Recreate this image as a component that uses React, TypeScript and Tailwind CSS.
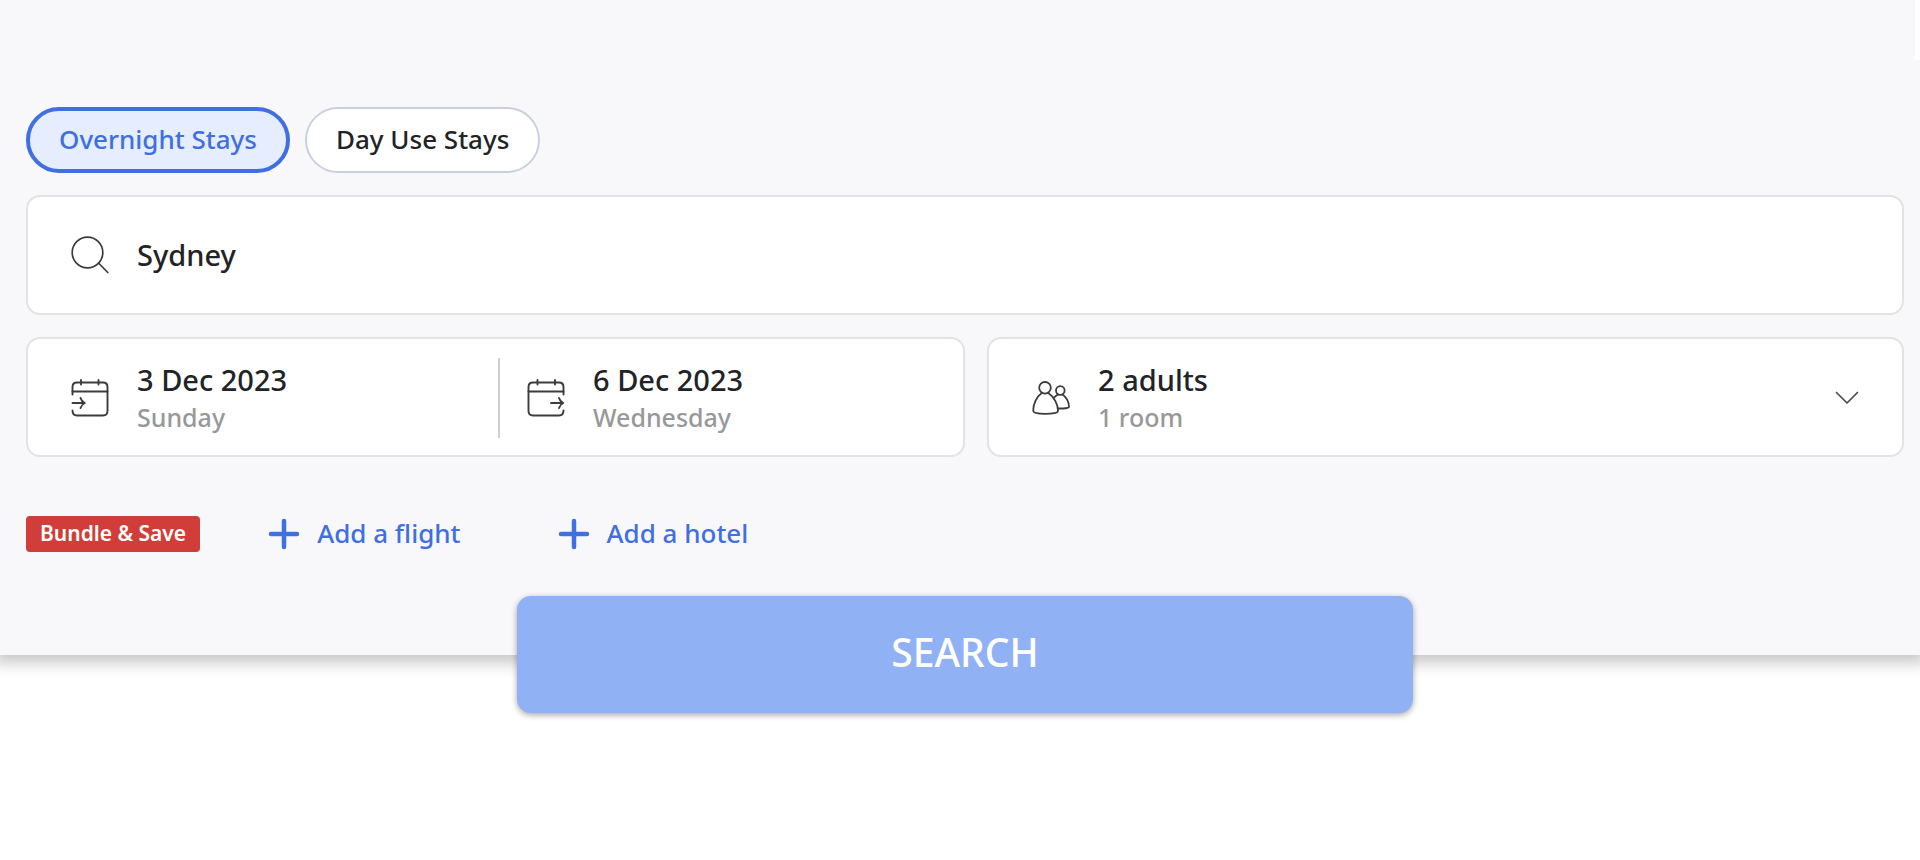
import { useState } from "react";
import type { ReactNode } from "react";

const iconClass = "h-[38px] w-[38px] shrink-0";

function SearchIcon() {
  return (
    <svg viewBox="0 0 38 38" className={iconClass} fill="none" stroke="#3a3c40" strokeWidth="1.7" strokeLinecap="round" aria-hidden="true">
      <circle cx="16.5" cy="16.5" r="15.3" />
      <path d="M27.5 27 36.8 36.5" />
    </svg>
  );
}

function CheckInIcon() {
  return (
    <svg viewBox="0 0 38 38" className={iconClass} fill="none" stroke="#3a3c40" strokeWidth="1.9" strokeLinecap="round" strokeLinejoin="round" aria-hidden="true">
      <path d="M1.5 15.5V8Q1.5 3.5 6 3.5H32Q36.5 3.5 36.5 8V32Q36.5 36.5 32 36.5H6Q1.5 36.5 1.5 31.5" />
      <path d="M1.5 12.5H36.5M10 1V5.5M27.5 1V5.5" />
      <path d="M1.5 24H13.5M9.5 19Q10.5 22.5 13.8 24Q10.5 25.5 9.5 29" />
    </svg>
  );
}

function CheckOutIcon() {
  return (
    <svg viewBox="0 0 38 38" className={iconClass} fill="none" stroke="#3a3c40" strokeWidth="1.9" strokeLinecap="round" strokeLinejoin="round" aria-hidden="true">
      <path d="M36.5 15.5V8Q36.5 3.5 32 3.5H6Q1.5 3.5 1.5 8V32Q1.5 36.5 6 36.5H32Q36.5 36.5 36.5 31.5" />
      <path d="M1.5 12.5H36.5M10.5 1V5.5M28 1V5.5" />
      <path d="M24 24H36M32 19Q33 22.5 36.3 24Q33 25.5 32 29" />
    </svg>
  );
}

function GuestsIcon() {
  return (
    <svg viewBox="0 0 38 38" className={iconClass} fill="none" stroke="#3a3c40" strokeWidth="1.8" strokeLinecap="round" strokeLinejoin="round" aria-hidden="true">
      <circle cx="13" cy="8.8" r="5.8" />
      <path d="M9.5 14.2C4.5 17.5 1.2 25.5 1.2 31.8C1.2 34 6 34.8 13.2 34.8C20.5 34.8 26 34 26 31.8C26 25.5 22 17.5 16.5 14.2" />
      <circle cx="28.3" cy="11.5" r="4.3" />
      <path d="M22.2 18.5Q24 16.5 26 15.6M30.6 15.4C34.500 18 37 23.500 37 27.800C37 29.300 32 29.600 26 29.500" />
    </svg>
  );
}

function ChevronIcon() {
  return (
    <svg viewBox="0 0 24 14" className="h-[14px] w-6 shrink-0" fill="none" stroke="#4b4d50" strokeWidth="1.7" strokeLinecap="round" strokeLinejoin="round" aria-hidden="true">
      <path d="M1.500 1.500 12 12 22.500 1.500" />
    </svg>
  );
}

function PlusIcon() {
  return (
    <svg viewBox="0 0 32 32" className="h-8 w-8 shrink-0" fill="none" stroke="#406fe2" strokeWidth="4.5" strokeLinecap="round" aria-hidden="true">
      <path d="M16 3V29M3 16H29" />
    </svg>
  );
}

function Field({ icon, title, detail, children }: { icon: ReactNode; title: string; detail: string; children?: ReactNode }) {
  return (
    <button type="button" className="flex h-full w-full items-center gap-7 text-left">
      {icon}
      <span className="flex flex-1 flex-col">
        <span className="text-[29px] leading-[38px]">{title}</span>
        <span className="text-[25px] leading-9 text-[#97989a]">{detail}</span>
      </span>
      {children}
    </button>
  );
}

function AddLink({ label }: { label: string }) {
  return (
    <a href="#" className="flex items-center gap-[17px] text-[26px] leading-9 text-[#406fe2]">
      <PlusIcon />
      <span className="pb-0.5">{label}</span>
    </a>
  );
}

const card = "h-[120px] items-center rounded-[14px] border-2 border-[#e2e3e5] bg-white";

export default function App() {
  const [stay, setStay] = useState("Overnight Stays");
  const [place, setPlace] = useState("Sydney");

  return (
    <main className="min-h-screen overflow-x-hidden bg-white font-['Noto_Sans',sans-serif] font-medium text-[#222326]">
      <form
        className="bg-[#f8f8fb] shadow-[0_2px_14px_6px_rgba(0,0,0,0.22)]"
        onSubmit={(e) => e.preventDefault()}
      >
        <div className="h-[60px] border-r-[5px] border-white" />
        <div className="flex flex-col pr-4 pl-[26px] pt-[47px]">
          <div className="mb-[22px] flex gap-[15px]">
            {["Overnight Stays", "Day Use Stays"].map((name) => (
              <button
                key={name}
                type="button"
                aria-pressed={stay === name}
                onClick={() => setStay(name)}
                className={
                  stay === name
                    ? "h-[66px] rounded-full border-4 border-[#406fe2] bg-[#e6edfe] px-[29px] pb-0.5 text-[26px] text-[#406fe2]"
                    : "h-[66px] rounded-full border-2 border-[#c8d0e2] bg-white px-[29px] pb-0.5 text-[26px]"
                }
              >
                {name}
              </button>
            ))}
          </div>

          <label className={`${card} mb-[22px] flex gap-7 px-[43px]`}>
            <SearchIcon />
            <input
              type="text"
              aria-label="Destination"
              value={place}
              onChange={(e) => setPlace(e.target.value)}
              className="min-w-0 flex-1 bg-transparent text-[29px] leading-[38px] outline-none"
            />
          </label>

          <div className="grid grid-cols-[939fr_917fr] gap-[22px]">
            <div className={`${card} grid grid-cols-[427fr_2px_463fr] pt-0.5 pl-[43px]`}>
              <Field icon={<CheckInIcon />} title="3 Dec 2023" detail="Sunday" />
              <span className="h-20 bg-[#cfd0d2]" />
              <div className="pl-[27px]">
                <Field icon={<CheckOutIcon />} title="6 Dec 2023" detail="Wednesday" />
              </div>
            </div>
            <div className={`${card} flex px-[43px] pt-0.5`}>
              <Field icon={<GuestsIcon />} title="2 adults" detail="1 room">
                <ChevronIcon />
              </Field>
            </div>
          </div>

          <div className="mt-[59px] flex h-9 items-center">
            <span className="mr-[68px] rounded bg-[#d13d38] px-[14px] pb-0.5 text-[21px] leading-[34px] font-semibold text-white">
              Bundle &amp; Save
            </span>
            <div className="flex gap-[97px]">
              <AddLink label="Add a flight" />
              <AddLink label="Add a hotel" />
            </div>
          </div>

          <button
            type="submit"
            className="mt-11 -mb-[58px] h-[117px] w-[896px] max-w-full self-center rounded-[14px] bg-[#91b1f5] pb-1 text-[39px] text-white shadow-[0_2px_6px_rgba(0,0,0,0.35)]"
          >
            SEARCH
          </button>
        </div>
      </form>
    </main>
  );
}
